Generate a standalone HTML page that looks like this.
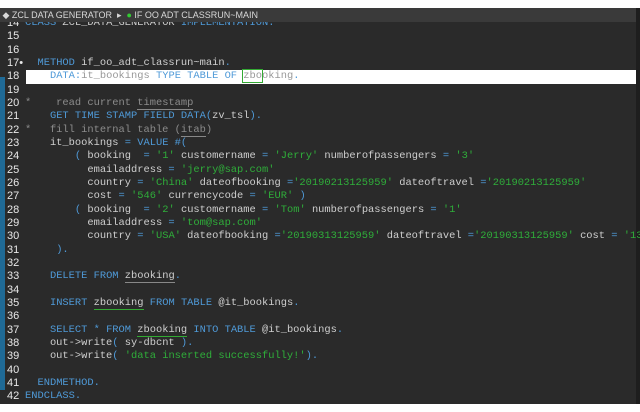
<!DOCTYPE html>
<html><head><style>
body{margin:0;width:640px;height:412px;background:#fff;position:relative;overflow:hidden;font-family:"Liberation Mono",monospace}
#ed{position:absolute;left:0;top:8px;width:636px;height:396px;background:#2a2a2a;overflow:hidden}
#rb{position:absolute;left:636px;top:8px;width:4px;height:396px;background:#1e1e1e}
.bar{position:absolute;left:0;top:8px;width:636px;height:14px;background:#3a3a3a;font:9px "Liberation Sans",sans-serif;color:#d8d8d8;line-height:14px;white-space:pre;z-index:5}
.strip{position:absolute;left:0;width:5px;background:#1f6a96}
.l{position:absolute;left:0;height:13.33px;line-height:13.33px;font-size:10.4px;white-space:pre;color:#cfcfcf;width:636px}
.n{position:absolute;left:7px;color:#e8e8e8;font-family:"Liberation Sans",sans-serif;font-size:11px}
.c{position:absolute;left:25px}
.k{color:#4f9ad8}.s{color:#2fae3a}.m{color:#8c8c8c}.d{color:#5aa0e0}
.hl{background:#fff;left:26px;width:610px;color:#222}
.hl .c{left:-1px}
u{text-decoration:none;border-bottom:1px solid #888}
</style></head><body>
<div id="ed"></div><div id="rb"></div>
<div class="bar"> ◆ ZCL DATA GENERATOR  ▸  <span style="color:#3c3">●</span> IF OO ADT CLASSRUN~MAIN</div>
<div class="strip" style="top:77px;height:313px"></div>
<div id="lines"></div>
<div class="l" style="top:17px"><span class="n">14</span><span class="c"><span class="k">CLASS</span> ZCL_DATA_GENERATOR <span class="k">IMPLEMENTATION.</span></span></div>
<div class="l" style="top:30.3px"><span class="n">15</span></div>
<div class="l" style="top:43.7px"><span class="n">16</span></div>
<div class="l" style="top:57px"><span class="n">17•</span><span class="c">  <span class="k">METHOD</span> if_oo_adt_classrun~main<span class="k">.</span></span></div>
<div class="l" style="top:70.3px"><span class="n">18</span></div>
<div class="l hl" style="top:70.3px"><span class="c">    <span class="k">DATA:</span><span style="color:#999">it_bookings</span> <span class="k">TYPE TABLE OF</span> <span style="color:#999;outline:1px solid #3a3">zbo</span><span style="color:#999">oking</span><span class="k">.</span></span></div>
<div class="l" style="top:83.7px"><span class="n">19</span></div>
<div class="l" style="top:97px"><span class="n">20</span><span class="c m">*    read current <u>timestamp</u></span></div>
<div class="l" style="top:110.3px"><span class="n">21</span><span class="c">    <span class="k">GET TIME STAMP FIELD DATA(</span>zv_tsl<span class="k">).</span></span></div>
<div class="l" style="top:123.7px"><span class="n">22</span><span class="c m">*   fill internal table (<u>itab</u>)</span></div>
<div class="l" style="top:137px"><span class="n">23</span><span class="c">    it_bookings <span class="k">= VALUE #(</span></span></div>
<div class="l" style="top:150.3px"><span class="n">24</span><span class="c">        <span class="k">(</span> booking  <span class="k">=</span> <span class="s">'1'</span> customername <span class="k">=</span> <span class="s">'Jerry'</span> numberofpassengers <span class="k">=</span> <span class="s">'3'</span></span></div>
<div class="l" style="top:163.7px"><span class="n">25</span><span class="c">          emailaddress <span class="k">=</span> <span class="s">'jerry@sap.com'</span></span></div>
<div class="l" style="top:177px"><span class="n">26</span><span class="c">          country <span class="k">=</span> <span class="s">'China'</span> dateofbooking <span class="k">=</span><span class="s">'20190213125959'</span> dateoftravel <span class="k">=</span><span class="s">'20190213125959'</span></span></div>
<div class="l" style="top:190.3px"><span class="n">27</span><span class="c">          cost <span class="k">=</span> <span class="s">'546'</span> currencycode <span class="k">=</span> <span class="s">'EUR'</span> <span class="k">)</span></span></div>
<div class="l" style="top:203.7px"><span class="n">28</span><span class="c">        <span class="k">(</span> booking  <span class="k">=</span> <span class="s">'2'</span> customername <span class="k">=</span> <span class="s">'Tom'</span> numberofpassengers <span class="k">=</span> <span class="s">'1'</span></span></div>
<div class="l" style="top:217px"><span class="n">29</span><span class="c">          emailaddress <span class="k">=</span> <span class="s">'tom@sap.com'</span></span></div>
<div class="l" style="top:230.3px"><span class="n">30</span><span class="c">          country <span class="k">=</span> <span class="s">'USA'</span> dateofbooking <span class="k">=</span><span class="s">'20190313125959'</span> dateoftravel <span class="k">=</span><span class="s">'20190313125959'</span> cost <span class="k">=</span> <span class="s">'13</span></span></div>
<div class="l" style="top:243.7px"><span class="n">31</span><span class="c">     <span class="k">).</span></span></div>
<div class="l" style="top:257px"><span class="n">32</span></div>
<div class="l" style="top:270.3px"><span class="n">33</span><span class="c">    <span class="k">DELETE FROM</span> <u>zbooking</u><span class="k">.</span></span></div>
<div class="l" style="top:283.7px"><span class="n">34</span></div>
<div class="l" style="top:297px"><span class="n">35</span><span class="c">    <span class="k">INSERT</span> <u style="border-color:#3a3">zbooking</u> <span class="k">FROM TABLE</span> @it_bookings<span class="k">.</span></span></div>
<div class="l" style="top:310.3px"><span class="n">36</span></div>
<div class="l" style="top:323.7px"><span class="n">37</span><span class="c">    <span class="k">SELECT * FROM</span> <u style="border-color:#3a3">zbooking</u> <span class="k">INTO TABLE</span> @it_bookings<span class="k">.</span></span></div>
<div class="l" style="top:337px"><span class="n">38</span><span class="c">    out-&gt;write<span class="k">(</span> sy-dbcnt <span class="k">).</span></span></div>
<div class="l" style="top:350.3px"><span class="n">39</span><span class="c">    out-&gt;write<span class="k">(</span> <span class="s">'data inserted successfully!'</span><span class="k">).</span></span></div>
<div class="l" style="top:363.7px"><span class="n">40</span></div>
<div class="l" style="top:377px"><span class="n">41</span><span class="c">  <span class="k">ENDMETHOD.</span></span></div>
<div class="l" style="top:390.3px"><span class="n">42</span><span class="c"><span class="k">ENDCLASS.</span></span></div>
</body></html>
